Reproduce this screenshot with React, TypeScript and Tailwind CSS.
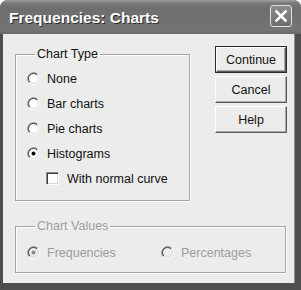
import React from "react";

function Radio({ checked, disabled }: { checked?: boolean; disabled?: boolean }) {
  return (
    <svg width="13" height="13" viewBox="0 0 13 13" className="shrink-0">
      <circle cx="6.5" cy="6.5" r="5" fill={disabled ? "#ececec" : "#ffffff"} />
      <path d="M2.26 10.74 A6 6 0 0 1 10.74 2.26" fill="none" stroke="#8a8a8a" strokeWidth="1" />
      <path d="M10.74 2.26 A6 6 0 0 1 2.26 10.74" fill="none" stroke="#ffffff" strokeWidth="1" />
      <path d="M2.96 10.04 A5 5 0 0 1 10.04 2.96" fill="none" stroke="#3a3a3a" strokeWidth="1" />
      <path d="M10.04 2.96 A5 5 0 0 1 2.96 10.04" fill="none" stroke="#d8d8d8" strokeWidth="1" />
      {checked && <circle cx="6.5" cy="6.5" r="2" fill={disabled ? "#8a8a8a" : "#000000"} />}
    </svg>
  );
}

function Btn({ label, def }: { label: string; def?: boolean }) {
  return (
    <div
      className={
        "w-[72px] h-[27px] " + (def ? "border border-[#2a2a2a]" : "")
      }
    >
      <div className="w-full h-full flex items-center justify-center border-t border-l border-t-white border-l-white border-b border-r border-b-[#5a5a5a] border-r-[#5a5a5a] shadow-[inset_-1px_-1px_0_#a8a8a8] bg-[#ececec] text-[#111111]">
        {label}
      </div>
    </div>
  );
}

export default function App() {
  return (
    <div
      className="w-[301px] h-[290px] bg-[#4e4e4e] rounded-t-[8px] overflow-hidden flex flex-col text-[12.5px] leading-[14px]"
      style={{ fontFamily: '"Liberation Sans", Arial, sans-serif' }}
    >
      <div className="h-[34px] shrink-0 flex items-center justify-between pl-[9px] pr-[9px] bg-[linear-gradient(#a2a2a2_0px,#7a7a7a_3px,#6e6e6e_8px,#747474_30px,#6a6a6a_34px)]">
        <span className="text-white font-bold text-[15.5px] leading-[18px] mt-[1px] [text-shadow:1px_1px_0_#2e2e2e]">
          Frequencies: Charts
        </span>
        <div className="w-[22px] h-[22px] mt-[-2px] rounded-[3px] border border-[#e2e2e2] bg-[linear-gradient(#8c8c8c,#6c6c6c)] flex items-center justify-center">
          <svg width="14" height="14" viewBox="0 0 14 14">
            <path d="M2.5 2.5 L11.5 11.5 M11.5 2.5 L2.5 11.5" stroke="#ffffff" strokeWidth="2.5" strokeLinecap="square" />
          </svg>
        </div>
      </div>
      <div className="ml-[3px] mr-[6px] mb-[7px] flex-1 bg-[#ececec] border-r border-r-[#909090] pt-[12px] pl-[12px] flex flex-col">
        <div className="flex items-start">
          <fieldset className="mt-[1px] w-[175px] h-[154px] border border-[#a4a4a4] shadow-[1px_1px_0_#ffffff,inset_1px_1px_0_#ffffff] pl-[11px] pt-[5px]">
            <legend className="ml-[8px] px-[2px] text-[#111111]">Chart Type</legend>
            {["None", "Bar charts", "Pie charts", "Histograms"].map((l) => (
              <div key={l} className="h-[25px] flex items-center gap-[7px] text-[#111111]">
                <Radio checked={l === "Histograms"} />
                <span>{l}</span>
              </div>
            ))}
            <div className="h-[25px] flex items-center gap-[8px] pl-[19px] text-[#111111]">
              <div className="w-[13px] h-[13px] bg-white border-t border-l border-t-[#8a8a8a] border-l-[#8a8a8a] border-b border-r border-b-white border-r-white shadow-[inset_1px_1px_0_#3a3a3a,inset_-1px_-1px_0_#d8d8d8]" />
              <span>With normal curve</span>
            </div>
          </fieldset>
          <div className="ml-[25px] flex flex-col gap-[3px]">
            <Btn label="Continue" def />
            <Btn label="Cancel" />
            <Btn label="Help" />
          </div>
        </div>
        <fieldset className="mt-[18px] w-[271px] h-[54px] border border-[#a4a4a4] shadow-[1px_1px_0_#ffffff,inset_1px_1px_0_#ffffff] pl-[11px] pt-[7px] text-[#9c9c9c]">
          <legend className="ml-[8px] px-[2px]">Chart Values</legend>
          <div className="h-[25px] flex items-center">
            <div className="w-[134px] flex items-center gap-[7px]">
              <Radio checked disabled />
              <span>Frequencies</span>
            </div>
            <div className="flex items-center gap-[7px]">
              <Radio disabled />
              <span>Percentages</span>
            </div>
          </div>
        </fieldset>
      </div>
    </div>
  );
}
